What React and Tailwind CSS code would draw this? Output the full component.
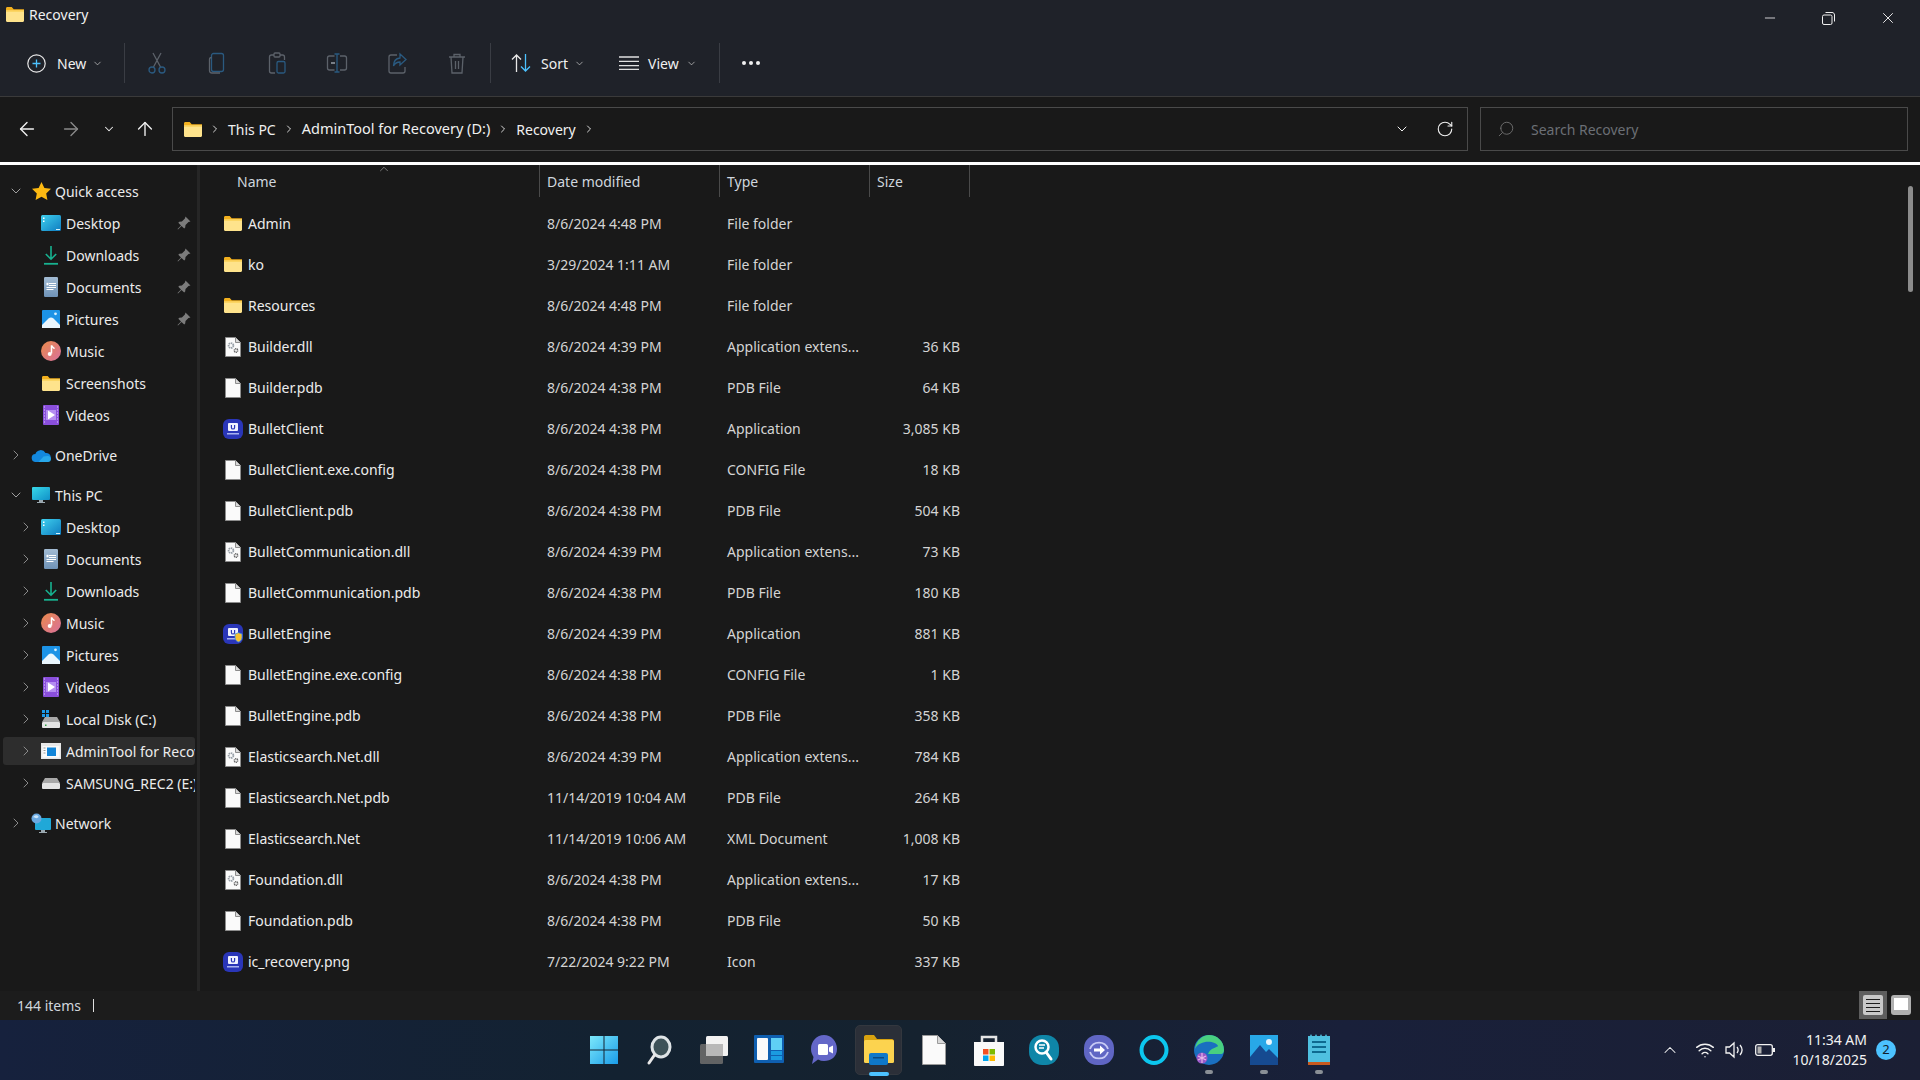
import React from 'react';
import { ChevronDown, ChevronRight, ChevronUp, ArrowLeft, ArrowRight, ArrowUp, RotateCw, X, Minus, Wifi, Search } from 'lucide-react';

const files = [
  ['folder', 'Admin', '8/6/2024 4:48 PM', 'File folder', ''],
  ['folder', 'ko', '3/29/2024 1:11 AM', 'File folder', ''],
  ['folder', 'Resources', '8/6/2024 4:48 PM', 'File folder', ''],
  ['dll', 'Builder.dll', '8/6/2024 4:39 PM', 'Application extens...', '36 KB'],
  ['file', 'Builder.pdb', '8/6/2024 4:38 PM', 'PDB File', '64 KB'],
  ['app', 'BulletClient', '8/6/2024 4:38 PM', 'Application', '3,085 KB'],
  ['file', 'BulletClient.exe.config', '8/6/2024 4:38 PM', 'CONFIG File', '18 KB'],
  ['file', 'BulletClient.pdb', '8/6/2024 4:38 PM', 'PDB File', '504 KB'],
  ['dll', 'BulletCommunication.dll', '8/6/2024 4:39 PM', 'Application extens...', '73 KB'],
  ['file', 'BulletCommunication.pdb', '8/6/2024 4:38 PM', 'PDB File', '180 KB'],
  ['shield', 'BulletEngine', '8/6/2024 4:39 PM', 'Application', '881 KB'],
  ['file', 'BulletEngine.exe.config', '8/6/2024 4:38 PM', 'CONFIG File', '1 KB'],
  ['file', 'BulletEngine.pdb', '8/6/2024 4:38 PM', 'PDB File', '358 KB'],
  ['dll', 'Elasticsearch.Net.dll', '8/6/2024 4:39 PM', 'Application extens...', '784 KB'],
  ['file', 'Elasticsearch.Net.pdb', '11/14/2019 10:04 AM', 'PDB File', '264 KB'],
  ['file', 'Elasticsearch.Net', '11/14/2019 10:06 AM', 'XML Document', '1,008 KB'],
  ['dll', 'Foundation.dll', '8/6/2024 4:38 PM', 'Application extens...', '17 KB'],
  ['file', 'Foundation.pdb', '8/6/2024 4:38 PM', 'PDB File', '50 KB'],
  ['app', 'ic_recovery.png', '7/22/2024 9:22 PM', 'Icon', '337 KB'],
];

const FolderIcon = ({ w = 18, h = 15 }) => (
  <svg width={w} height={h} viewBox="0 0 18 15">
    <path d="M0 1.5C0 .7.6 0 1.3 0h4.4l2 2.2H18V5H0z" fill="#f2b01e" />
    <path d="M0 3.6h18v10.2c0 .6-.5 1.2-1.1 1.2H1.1C.5 15 0 14.4 0 13.8z" fill="#fee38c" />
    <path d="M0 3.6h18v1.2H0z" fill="#fbd25a" />
  </svg>
);

const PageIcon = () => (
  <svg width="16" height="20" viewBox="0 0 16 20">
    <path d="M.5.5h10l5 5v14H.5z" fill="#fafafa" stroke="#8c8c8c" />
    <path d="M10.5.5v5h5" fill="#d8d8d8" stroke="#8c8c8c" />
  </svg>
);

const DllIcon = () => (
  <svg width="16" height="20" viewBox="0 0 16 20">
    <path d="M.5.5h10l5 5v14H.5z" fill="#fafafa" stroke="#8c8c8c" />
    <path d="M10.5.5v5h5" fill="#d8d8d8" stroke="#8c8c8c" />
    <circle cx="6" cy="8.5" r="2.4" fill="none" stroke="#98a0a8" strokeWidth="1.8" strokeDasharray="1.4 .6" />
    <circle cx="11" cy="13.5" r="1.7" fill="none" stroke="#666" strokeWidth="1.5" strokeDasharray="1.1 .5" />
  </svg>
);

const AppIcon = ({ shield }) => (
  <svg width="20" height="20" viewBox="0 0 20 20">
    <rect width="20" height="20" rx="6" fill="#2a36b8" />
    <rect x="5" y="4" width="10" height="8" rx="1" fill="#f0f2ff" />
    <path d="M8.4 6v2.4a1.6 1.6 0 0 0 3.2 0V6" fill="none" stroke="#2a36b8" strokeWidth="1.2" />
    <rect x="4" y="14" width="12" height="1.5" fill="#a8b2f0" />
    {shield && <path d="M12 10l3.500-1.300L19 10v3.500c0 2.500-1.800 4-3.500 4.500-1.700-.5-3.500-2-3.500-4.500z" fill="#f6c030" stroke="#3a8ee0" strokeWidth=".8" />}
  </svg>
);

const fileIcon = (kind) => {
  if (kind === 'folder') return <FolderIcon />;
  if (kind === 'dll') return <DllIcon />;
  if (kind === 'file') return <PageIcon />;
  return <AppIcon shield={kind === 'shield'} />;
};

const Pin = () => (
  <svg width="14" height="14" viewBox="0 0 14 14">
    <path d="M8.500.5l5 5-2 .5-3 3-.3 2.600-1 1L4.500 9.900 1 13.500l-.5-.5L4 9.500 1.300 6.800l1-1 2.600-.3 3-3z" fill="#7c7c7c" />
  </svg>
);

const DesktopIcon = () => (
  <svg width="20" height="16" viewBox="0 0 20 16">
    <defs><linearGradient id="dsk" x1="0" y1="0" x2="1" y2="1"><stop offset="0" stopColor="#3fd0ee" /><stop offset="1" stopColor="#0f7cc0" /></linearGradient></defs>
    <rect width="20" height="16" rx="1.500" fill="url(#dsk)" />
    <rect x="2" y="2.500" width="1.500" height="1.500" fill="#fff" />
    <rect x="2" y="5.500" width="1.500" height="1.500" fill="#fff" />
    <rect x="15" y="14" width="4" height="1" fill="#d8f2fa" />
  </svg>
);
const DownloadsIcon = () => (
  <svg width="14" height="20" viewBox="0 0 14 20" fill="none" stroke="#17b290" strokeWidth="1.600">
    <path d="M7 1v13M1.800 9L7 14.200 12.200 9" />
    <path d="M0 18.800h14" strokeWidth="1.800" />
  </svg>
);
const DocumentsIcon = () => (
  <svg width="14" height="20" viewBox="0 0 14 20">
    <defs><linearGradient id="doc" x1="0" y1="0" x2="0" y2="1"><stop offset="0" stopColor="#a3bcd4" /><stop offset="1" stopColor="#6f93b8" /></linearGradient></defs>
    <rect width="14" height="20" rx="1.200" fill="url(#doc)" />
    <path d="M5 6.500h7M5 8.500h7M2.500 10.500h9.500M2.500 12.500h7" stroke="#fff" strokeWidth="1" />
    <rect x="2.500" y="5.800" width="2" height="2.500" fill="#fff" />
  </svg>
);
const PicturesIcon = () => (
  <svg width="18" height="18" viewBox="0 0 18 18">
    <rect width="18" height="18" rx="1" fill="#1c93e6" />
    <path d="M0 15l6.500-6.500c1.500-1.300 3.500-1.300 5 0L18 15v3H0z" fill="#eaf6fd" />
    <circle cx="13.500" cy="3.800" r="1.400" fill="#d5eefc" />
  </svg>
);
const MusicIcon = () => (
  <svg width="20" height="20" viewBox="0 0 20 20">
    <defs><linearGradient id="mus" x1="0" y1="0" x2="1" y2="1"><stop offset="0" stopColor="#ea8a4a" /><stop offset="1" stopColor="#d8709c" /></linearGradient></defs>
    <circle cx="10" cy="10" r="10" fill="url(#mus)" />
    <path d="M10.500 4.500v8" stroke="#fff" strokeWidth="1.500" />
    <circle cx="8.700" cy="13" r="2" fill="#fff" />
    <path d="M10.500 4.500c.5 1.800 2.200 2 3 3.200" stroke="#fff" strokeWidth="1.500" fill="none" />
  </svg>
);
const VideosIcon = () => (
  <svg width="16" height="20" viewBox="0 0 16 20">
    <rect width="16" height="20" rx="1" fill="#8a4fdc" />
    <path d="M3 5h10v10H3z" fill="#b48df0" />
    <path d="M5 5.500l7 4.500-7 4.500z" fill="#fff" />
    <path d="M1 2h1M1 5h1M1 8h1M1 11h1M1 14h1M1 17h1M14 2h1M14 5h1M14 8h1M14 11h1M14 14h1M14 17h1" stroke="#e0d0fa" strokeWidth="1.200" />
  </svg>
);
const StarIcon = () => (
  <svg width="19" height="18" viewBox="0 0 19 18">
    <path d="M9.500 0l2.900 5.900 6.600.9-4.800 4.600 1.200 6.600-5.900-3.200L3.600 18l1.200-6.600L0 6.800l6.600-.9z" fill="#fcb912" />
  </svg>
);
const CloudIcon = () => (
  <svg width="20" height="13" viewBox="0 0 20 13">
    <path d="M5 13a4 4 0 0 1-.6-8A5.500 5.500 0 0 1 14.500 4a4.500 4.500 0 0 1 1.500 9z" fill="#1388dd" />
    <path d="M7.500 13l5-5.500 4-.4A3 3 0 0 1 20 10c0 1.700-1.300 3-3 3z" fill="#28a8ea" />
  </svg>
);
const MonitorIcon = () => (
  <svg width="18" height="16" viewBox="0 0 18 16">
    <defs><linearGradient id="pc" x1="0" y1="0" x2="1" y2="1"><stop offset="0" stopColor="#38d8e8" /><stop offset="1" stopColor="#1090c8" /></linearGradient></defs>
    <rect width="18" height="13" rx="1" fill="url(#pc)" />
    <path d="M7 13h4v2H7zM5 15h8v1H5z" fill="#9aa8b0" />
  </svg>
);
const DiskIcon = ({ win }) => (
  <svg width="18" height={win ? 18 : 12} viewBox={win ? '0 0 18 18' : '0 6 18 12'}>
    {win && <path d="M0 0h3v3H0zM4 0h3v3H4zM0 4h3v3H0zM4 4h3v3H4z" fill="#1c9ae8" />}
    <path d="M3 7h12l3 5H0z" fill="#a8a8a8" />
    <rect y="12" width="18" height="6" rx="1" fill="#e4e4e4" />
    {win && <rect x="3" y="14.500" width="1.500" height="1.500" fill="#2ea043" />}
  </svg>
);
const AdminDriveIcon = () => (
  <svg width="20" height="16" viewBox="0 0 20 16">
    <rect width="20" height="16" fill="#e8e8e8" />
    <rect x="1.500" y="3" width="17" height="11.500" fill="#fafafa" />
    <rect x="6" y="4.500" width="9" height="8.500" fill="#1285d8" />
    <path d="M2.500 5h2M2.500 7.500h2M2.500 10h2" stroke="#999" />
  </svg>
);
const NetworkIcon = () => (
  <svg width="20" height="20" viewBox="0 0 20 20">
    <rect x="4" y="5" width="16" height="12" rx="1" fill="#20a8d8" />
    <path d="M10 17h4v2h-4zM8 19h8v1H8z" fill="#9aa8b0" />
    <circle cx="5.500" cy="5.500" r="5" fill="#6aa8e0" />
    <path d="M2.500 3.500c2-1.800 4-1.300 5 0 .5 1-1.500 2-3 1.500-1-.3-2.500 0-2-1.500z" fill="#c8e4fa" />
  </svg>
);

const IconCell = ({ children }) => <span className="flex h-5 w-5 shrink-0 items-center justify-center">{children}</span>;

const NavRow = ({ level = 0, open, icon, label, selected, gap }) => (
  <div className={`relative flex h-[32px] items-center ${gap ? 'mt-[8px]' : ''}`}>
    {selected && <div className="absolute left-0 right-[2px] top-[2px] h-[28px] rounded-[3px] bg-[#2d2d2d]" />}
    <div className={`relative flex w-[192px] items-center overflow-hidden ${level === 0 ? 'pl-[5px]' : 'pl-[15px]'}`}>
      {open
        ? <ChevronDown size={16} strokeWidth={1.5} className="shrink-0 text-[#a0a0a0]" />
        : <ChevronRight size={16} strokeWidth={1.5} className="shrink-0 text-[#8a8a8a]" />}
      <span className={`ml-[7px] ${level === 0 ? 'w-[24px]' : 'w-[25px]'} shrink-0`}><IconCell>{icon}</IconCell></span>
      <span className="whitespace-nowrap text-[14px] text-[#ececec]">{label}</span>
    </div>
  </div>
);

const QuickRow = ({ icon, label, pin }) => (
  <div className="relative flex h-[32px] items-center pl-[38px]">
    <span className="w-[25px] shrink-0"><IconCell>{icon}</IconCell></span>
    <span className="whitespace-nowrap text-[14px] text-[#ececec]">{label}</span>
    {pin && <span className="ml-auto mr-[6px]"><Pin /></span>}
  </div>
);

const Sidebar = () => (
  <div className="flex w-[200px] shrink-0 flex-col border-r-[3px] border-[#262626] pl-[3px] pt-[10px]">
    <NavRow open icon={<StarIcon />} label="Quick access" />
    <QuickRow icon={<DesktopIcon />} label="Desktop" pin />
    <QuickRow icon={<DownloadsIcon />} label="Downloads" pin />
    <QuickRow icon={<DocumentsIcon />} label="Documents" pin />
    <QuickRow icon={<PicturesIcon />} label="Pictures" pin />
    <QuickRow icon={<MusicIcon />} label="Music" />
    <QuickRow icon={<FolderIcon w={18} h={15} />} label="Screenshots" />
    <QuickRow icon={<VideosIcon />} label="Videos" />
    <NavRow gap icon={<CloudIcon />} label="OneDrive" />
    <NavRow gap open icon={<MonitorIcon />} label="This PC" />
    <NavRow level={1} icon={<DesktopIcon />} label="Desktop" />
    <NavRow level={1} icon={<DocumentsIcon />} label="Documents" />
    <NavRow level={1} icon={<DownloadsIcon />} label="Downloads" />
    <NavRow level={1} icon={<MusicIcon />} label="Music" />
    <NavRow level={1} icon={<PicturesIcon />} label="Pictures" />
    <NavRow level={1} icon={<VideosIcon />} label="Videos" />
    <NavRow level={1} icon={<DiskIcon win />} label="Local Disk (C:)" />
    <NavRow level={1} selected icon={<AdminDriveIcon />} label="AdminTool for Recovery (D:)" />
    <NavRow level={1} icon={<DiskIcon />} label="SAMSUNG_REC2 (E:)" />
    <NavRow gap icon={<NetworkIcon />} label="Network" />
  </div>
);

const FileTable = () => (
  <div className="relative min-w-0 flex-1 overflow-hidden">
    <ChevronUp size={14} strokeWidth={1.25} className="absolute left-[177px] top-[-3px] text-[#9a9a9a]" />
    <div className="flex h-[38px] text-[14px] text-[#cfd6de]">
      <div className="flex h-[32px] w-[340px] items-center border-r border-[#4a4a4a] pl-[37px]">Name</div>
      <div className="flex h-[32px] w-[180px] items-center border-r border-[#4a4a4a] pl-[7px]">Date modified</div>
      <div className="flex h-[32px] w-[150px] items-center border-r border-[#4a4a4a] pl-[7px]">Type</div>
      <div className="flex h-[32px] w-[100px] items-center border-r border-[#4a4a4a] pl-[7px]">Size</div>
    </div>
    {files.map(([kind, name, date, type, size]) => (
      <div key={name} className="flex h-[41px] items-center text-[14px] text-[#d4d4d4]">
        <div className="flex w-[340px] items-center pl-[23px] text-[#ececec]">
          <span className="flex w-[25px] justify-start">
            <span className="flex w-[20px] justify-center">{fileIcon(kind)}</span>
          </span>
          <span>{name}</span>
        </div>
        <div className="w-[180px] pl-[7px]">{date}</div>
        <div className="w-[150px] pl-[7px]">{type}</div>
        <div className="w-[90px] text-right">{size}</div>
      </div>
    ))}
    <div className="absolute right-[7px] top-[21px] h-[106px] w-[5px] rounded-full bg-[#8c8c8c]" />
  </div>
);

const ToolIcon = ({ children }) => (
  <div className="flex h-[40px] w-[60px] items-center justify-center">
    <svg width="24" height="24" viewBox="0 0 24 24" fill="none" stroke="#5c626a" strokeWidth="1.300">{children}</svg>
  </div>
);

const Divider = () => <div className="h-[40px] w-px shrink-0 bg-[#3a3d44]" />;

const Toolbar = () => (
  <div className="flex h-[54px] items-start border-b border-[#3a3a3a] text-[14px] text-[#f0f0f0]">
    <div className="flex h-[40px] w-[124px] items-center pl-[27px]">
      <svg width="19" height="19" viewBox="0 0 19 19" fill="none">
        <circle cx="9.500" cy="9.500" r="8.700" stroke="#e8e8e8" strokeWidth="1.200" />
        <path d="M9.500 5.500v8M5.500 9.500h8" stroke="#4cc2ff" strokeWidth="1.300" />
      </svg>
      <span className="ml-[11px]">New</span>
      <ChevronDown size={11} strokeWidth={1.5} className="ml-[6px] text-[#d0d0d0]" />
    </div>
    <Divider />
    <div className="flex w-[2px]" />
    <ToolIcon>
      <path d="M8 2l7.500 14M16 2L8.500 16" />
      <circle cx="7" cy="19" r="3" stroke="#2a5a80" />
      <circle cx="17" cy="19" r="3" stroke="#2a5a80" />
    </ToolIcon>
    <ToolIcon>
      <rect x="6.500" y="2.500" width="12" height="18" rx="2" stroke="#2a5a80" />
      <path d="M6.500 6.500c-1.200 0-2 1-2 2v11c0 1.500 1 2.500 2.500 2.500h8" />
    </ToolIcon>
    <ToolIcon>
      <path d="M9 4H6.500c-1 0-2 1-2 2v14c0 1 1 2 2 2H10M15 4h2.500c1 0 2 1 2 2v3" />
      <rect x="9" y="2" width="6" height="4" rx="1" />
      <rect x="12" y="10.500" width="8" height="11.500" rx="1.500" stroke="#2a5a80" />
    </ToolIcon>
    <ToolIcon>
      <path d="M9.500 5H4.500c-1.200 0-2 1-2 2v10c0 1 .8 2 2 2h5M15 5h4.500c1.200 0 2 1 2 2v10c0 1-.8 2-2 2H15" />
      <path d="M12 3v18M9.500 3h5M9.500 21h5" stroke="#2a5a80" />
      <path d="M6 12h4" stroke="#7a8088" strokeWidth="2" />
    </ToolIcon>
    <ToolIcon>
      <path d="M12 4H6c-1.200 0-2 1-2 2v14c0 1 .8 2 2 2h12c1.200 0 2-1 2-2v-4" />
      <path d="M15 3l6 5.500-6 5.500v-3c-3 0-5 1-6.500 4 0-5 2.500-7.500 6.500-8z" stroke="#2a5a80" />
    </ToolIcon>
    <ToolIcon>
      <path d="M4 6h16M9 6V3.500h6V6M6 6l1 16h10l1-16M10.500 10v8M13.500 10v8" />
    </ToolIcon>
    <div className="flex w-[3px]" />
    <Divider />
    <div className="flex h-[40px] w-[118px] items-center pl-[20px]">
      <svg width="20" height="20" viewBox="0 0 20 20" fill="none" strokeWidth="1.300">
        <path d="M5.500 19V2M1 6.500l4.500-4.500L10 6.500" stroke="#e8e8e8" />
        <path d="M14.500 1v17M10 13.500l4.500 4.500 4.500-4.500" stroke="#4cc2ff" />
      </svg>
      <span className="ml-[10px]">Sort</span>
      <ChevronDown size={11} strokeWidth={1.5} className="ml-[6px] text-[#d0d0d0]" />
    </div>
    <div className="flex h-[40px] w-[110px] items-center pl-[10px]">
      <svg width="20" height="14" viewBox="0 0 20 14" stroke="#e0e0e0" strokeWidth="1.300">
        <path d="M0 1h20M0 5.300h20M0 9.600h20M0 13.500h20" />
      </svg>
      <span className="ml-[9px]">View</span>
      <ChevronDown size={11} strokeWidth={1.5} className="ml-[7px] text-[#d0d0d0]" />
    </div>
    <Divider />
    <div className="flex h-[40px] items-center gap-[3px] pl-[22px]">
      <span className="h-[4px] w-[4px] rounded-full bg-[#f0f0f0]" />
      <span className="h-[4px] w-[4px] rounded-full bg-[#f0f0f0]" />
      <span className="h-[4px] w-[4px] rounded-full bg-[#f0f0f0]" />
    </div>
  </div>
);

const TitleBar = () => (
  <div className="flex h-[43px] items-start">
    <div className="flex h-[28px] items-center pl-[6px] text-[14px] text-[#f0f0f0]">
      <FolderIcon w={18} h={15} />
      <span className="ml-[5px]">Recovery</span>
    </div>
    <div className="ml-auto flex pr-[3px] pt-[4px] text-[#f0f0f0]">
      <div className="flex h-[28px] w-[59px] items-center justify-center"><Minus size={16} strokeWidth={1.25} /></div>
      <div className="flex h-[28px] w-[59px] items-center justify-center">
        <svg width="13" height="13" viewBox="0 0 13 13" fill="none" stroke="#f0f0f0">
          <rect x=".5" y="3" width="9.500" height="9.500" rx="1.500" />
          <path d="M3.500.5H10c1.500 0 2.500 1 2.500 2.500v6.500" />
        </svg>
      </div>
      <div className="flex h-[28px] w-[59px] items-center justify-center"><X size={18} strokeWidth={1.25} /></div>
    </div>
  </div>
);

const Crumb = () => <ChevronRight size={12} strokeWidth={1.75} className="mx-[7px] text-[#f0f0f0]" />;

const AddressRow = () => (
  <div className="flex h-[65px] items-start bg-[#191919] pt-[10px]">
    <div className="flex h-[44px] w-[172px] shrink-0 items-center text-[#f0f0f0]">
      <ArrowLeft size={22} strokeWidth={1.5} className="ml-[16px]" />
      <ArrowRight size={22} strokeWidth={1.5} className="ml-[22px] text-[#8a8a8a]" />
      <ChevronDown size={14} strokeWidth={1.75} className="ml-[20px]" />
      <ArrowUp size={22} strokeWidth={1.5} className="ml-[18px]" />
    </div>
    <div className="flex h-[44px] w-[1296px] shrink-0 items-center border border-[#4a4a4a] pl-[11px] text-[14px] text-[#f0f0f0]">
      <FolderIcon w={18} h={15} />
      <Crumb />
      <span>This PC</span>
      <Crumb />
      <span className="text-[14.500px]">AdminTool for Recovery (D:)</span>
      <Crumb />
      <span>Recovery</span>
      <Crumb />
      <ChevronDown size={16} strokeWidth={1.5} className="ml-auto mr-[26px]" />
      <RotateCw size={18} strokeWidth={1.5} className="mr-[13px]" />
    </div>
    <div className="ml-[12px] flex h-[44px] w-[428px] shrink-0 items-center border border-[#4a4a4a] pl-[16px] text-[14px] text-[#6b6f75]">
      <Search size={18} strokeWidth={1.25} className="-scale-x-100 text-[#6e6e6e]" />
      <span className="ml-[16px]">Search Recovery</span>
    </div>
  </div>
);

const StatusBar = () => (
  <div className="flex h-[29px] items-center bg-[#1c1c1c] pl-[17px] text-[14px] text-[#d0d6dc]">
    <span>144 items</span>
    <span className="ml-[12px] h-[13px] w-px bg-[#e0e0e0]" />
    <div className="ml-auto flex h-full items-start pr-[5px]">
      <div className="flex h-[28px] w-[28px] items-center justify-center bg-[#5e5e5e]">
        <div className="flex h-[20px] w-[20px] flex-col justify-center gap-[3px] rounded-[2px] bg-[#c8c8c8] px-[3px]">
          <span className="h-px bg-[#1c1c1c]" />
          <span className="h-px bg-[#1c1c1c]" />
          <span className="h-px bg-[#1c1c1c]" />
          <span className="h-px bg-[#1c1c1c]" />
        </div>
      </div>
      <div className="flex h-[28px] w-[28px] items-center justify-center">
        <div className="h-[20px] w-[20px] rounded-[3px] border-[3px] border-b-[5px] border-[#b0b0b0] bg-white" />
      </div>
    </div>
  </div>
);

const tbIcons = [
  <svg width="30" height="30" viewBox="0 0 30 30">
    <defs><linearGradient id="st" x1="0" y1="0" x2="1" y2="1"><stop offset="0" stopColor="#7ce8fb" /><stop offset="1" stopColor="#1a9ce8" /></linearGradient></defs>
    <path d="M1 1h13.500v13.500H1zM15.500 1H29v13.500H15.500zM1 15.500h13.500V29H1zM15.500 15.500H29V29H15.500z" fill="url(#st)" />
  </svg>,
  <svg width="30" height="30" viewBox="0 0 30 30" fill="none">
    <ellipse cx="17" cy="12" rx="9" ry="10" fill="#3e5258" stroke="#dfe4e6" strokeWidth="3" />
    <path d="M10.500 20L5 28" stroke="#e8e8e8" strokeWidth="3" strokeLinecap="round" />
  </svg>,
  <svg width="32" height="30" viewBox="0 0 32 30">
    <rect x="8" y="1" width="22" height="20" rx="1.500" fill="#f2f2f2" />
    <rect x="2" y="9" width="23" height="20" rx="1.500" fill="#6a6a6a" fillOpacity=".9" />
    <rect x="8" y="9" width="17" height="12" fill="#b8b8b8" />
  </svg>,
  <svg width="30" height="30" viewBox="0 0 30 30">
    <rect width="30" height="28" rx="1" fill="#0f5fb0" />
    <rect x="3" y="3" width="11" height="22" rx="1" fill="#fafafa" />
    <rect x="17" y="3" width="11" height="12" fill="#5fd0f5" />
    <rect x="17" y="16" width="11" height="4" fill="#1a9be0" />
    <rect x="17" y="21" width="11" height="4" fill="#1a9be0" />
  </svg>,
  <svg width="30" height="32" viewBox="0 0 30 32">
    <path d="M15 1c7 0 13 6 13 14s-6 12-13 12c-2 0-4-.5-6-1.500L3 30l1.500-7C3 20.500 2 18 2 15 2 7 8 1 15 1z" fill="#6467c8" />
    <rect x="9" y="10" width="10" height="11" rx="1.500" fill="#fff" />
    <path d="M20 13.500l4-2v8l-4-2z" fill="#fff" />
  </svg>,
  <svg width="30" height="30" viewBox="0 0 30 30">
    <path d="M0 2c0-1 .7-2 2-2h8l3 4h15c1 0 2 1 2 2v4H0z" fill="#d9a20f" />
    <rect y="5" width="30" height="23" rx="1.500" fill="#fcd34f" />
    <rect x="5" y="18" width="19" height="12" rx="2" fill="#0f78c8" />
    <rect x="9" y="22" width="11" height="1.500" fill="#0a4a80" />
  </svg>,
  <svg width="24" height="30" viewBox="0 0 24 30">
    <path d="M.5.500h15l8 8v21H.500z" fill="#fafafa" stroke="#9a9a9a" />
    <path d="M15.500.500v8h8" fill="#d8d8d8" stroke="#9a9a9a" />
  </svg>,
  <svg width="30" height="32" viewBox="0 0 30 32" fill="none">
    <path d="M8 10V3h14v7" stroke="#e4e4e4" strokeWidth="2.500" />
    <path d="M0 8h30v23c0 .5-.5 1-1 1H1c-.5 0-1-.5-1-1z" fill="#fafafa" />
    <rect x="9" y="15" width="5.500" height="5.500" fill="#f25022" />
    <rect x="15.500" y="15" width="5.500" height="5.500" fill="#7fba00" />
    <rect x="9" y="21.500" width="5.500" height="5.500" fill="#00a4ef" />
    <rect x="15.500" y="21.500" width="5.500" height="5.500" fill="#ffb900" />
  </svg>,
  <svg width="30" height="30" viewBox="0 0 30 30" fill="none">
    <rect width="30" height="30" rx="13" fill="#0f86a8" />
    <circle cx="13" cy="12" r="6.500" stroke="#fff" strokeWidth="2.500" />
    <path d="M10 10h6M10 13h5" stroke="#fff" strokeWidth="1.500" />
    <path d="M17 17l5 7" stroke="#fff" strokeWidth="3" strokeLinecap="round" />
  </svg>,
  <svg width="30" height="30" viewBox="0 0 30 30" fill="none">
    <rect width="30" height="30" rx="13" fill="#6066c4" />
    <path d="M6 14a9.500 9.500 0 0 1 18 0M24 17a9.500 9.500 0 0 1-18 0" stroke="#c8cbf5" strokeWidth="1.800" />
    <path d="M10 13.500h6v-3l5 4.500-5 4.500v-3h-6z" fill="#fff" />
  </svg>,
  <svg width="30" height="30" viewBox="0 0 30 30" fill="none">
    <ellipse cx="15" cy="15" rx="12.500" ry="13" stroke="#0cc6ee" strokeWidth="4" />
    <path d="M8 24l7 3-6 .5z" fill="#0cc6ee" />
  </svg>,
  <svg width="30" height="30" viewBox="0 0 30 30">
    <circle cx="15" cy="15" r="15" fill="#1a6fc0" />
    <path d="M1 14C2 5 9 0 15 0c8 0 15 6 15 15 0 2-1 4-3 4H14c2-6 10-7 10-8C22 6 6 4 1 14z" fill="#48d080" />
    <circle cx="8" cy="23" r="5.500" fill="#9a58c8" />
    <path d="M8 18v10M4 21l8 4M4 25l8-4" stroke="#e8b8e8" strokeWidth="1.200" />
  </svg>,
  <svg width="28" height="30" viewBox="0 0 28 30">
    <rect width="28" height="30" fill="#28a8e8" />
    <path d="M0 30V22L10 10l6 7 3-3 9 9v7z" fill="#164a90" />
    <circle cx="19" cy="7" r="3" fill="#e8f6fd" />
  </svg>,
  <svg width="22" height="32" viewBox="0 0 22 32">
    <rect y="2" width="22" height="26" fill="#4fc0e0" />
    <path d="M2 2L3 0l1 2M7 2l1-2 1 2M12 2l1-2 1 2M17 2l1-2 1 2" fill="#4fc0e0" />
    <rect y="28" width="22" height="3" fill="#c85a20" />
    <path d="M4 8h14M4 13h14M4 18h14" stroke="#0e6a90" strokeWidth="2" />
  </svg>,
];

const Taskbar = () => (
  <div className="flex h-[60px] bg-[linear-gradient(90deg,#16213d_0%,#132231_32%,#15222f_48%,#19203a_70%,#1b1f34_100%)]">
    <div className="ml-[576px] flex">
      {tbIcons.map((icon, i) => (
        <div key={i} className="relative flex h-[60px] w-[55px] items-center justify-center">
          {i === 5 && <div className="absolute left-[4px] top-[5px] h-[50px] w-[47px] rounded-[5px] border border-[#33373e] bg-[#2b2f38]" />}
          <span className="relative">{icon}</span>
          {i === 5 && <span className="absolute bottom-[4px] left-[18px] h-[4px] w-[20px] rounded-full bg-[#4cc2ff]" />}
          {i > 10 && <span className="absolute bottom-[6px] left-[24px] h-[4px] w-[8px] rounded-full bg-[#8a8f96]" />}
        </div>
      ))}
    </div>
    <div className="ml-auto flex items-center pr-[24px] text-[#f2f2f2]">
      <ChevronUp size={20} strokeWidth={1.25} />
      <Wifi size={20} strokeWidth={1.75} className="ml-[15px]" />
      <svg width="20" height="18" viewBox="0 0 20 18" fill="none" stroke="#f2f2f2" strokeWidth="1.300" className="ml-[10px]">
        <path d="M1 6h3.500L9 2v14l-4.500-4H1zM12 6c1.500 2 1.500 4 0 6M15 4c2.500 3 2.500 7 0 10" />
      </svg>
      <svg width="20" height="12" viewBox="0 0 20 12" fill="none" className="ml-[10px]">
        <rect x=".7" y=".7" width="16.600" height="10.600" rx="2" stroke="#f2f2f2" strokeWidth="1.300" />
        <rect x="2.500" y="2.500" width="4" height="7" fill="#b0b0b0" />
        <rect x="18" y="4" width="2" height="4" fill="#f2f2f2" />
      </svg>
      <div className="ml-[20px] flex w-[72px] flex-col items-end text-[14px] leading-[20px]">
        <span>11:34 AM</span>
        <span>10/18/2025</span>
      </div>
      <div className="ml-[9px] flex h-[20px] w-[20px] items-center justify-center rounded-full bg-[#4cc2ff] text-[13px] text-[#10202c]">2</div>
    </div>
  </div>
);

export default function App() {
  return (
    <div className="flex h-[1080px] w-[1920px] flex-col overflow-hidden bg-[#191919] font-['Noto_Sans',sans-serif]">
      <div className="bg-[#1f2229]">
        <TitleBar />
        <Toolbar />
      </div>
      <AddressRow />
      <div className="h-[3px] bg-white" />
      <div className="flex min-h-0 flex-1">
        <Sidebar />
        <FileTable />
      </div>
      <StatusBar />
      <Taskbar />
    </div>
  );
}
